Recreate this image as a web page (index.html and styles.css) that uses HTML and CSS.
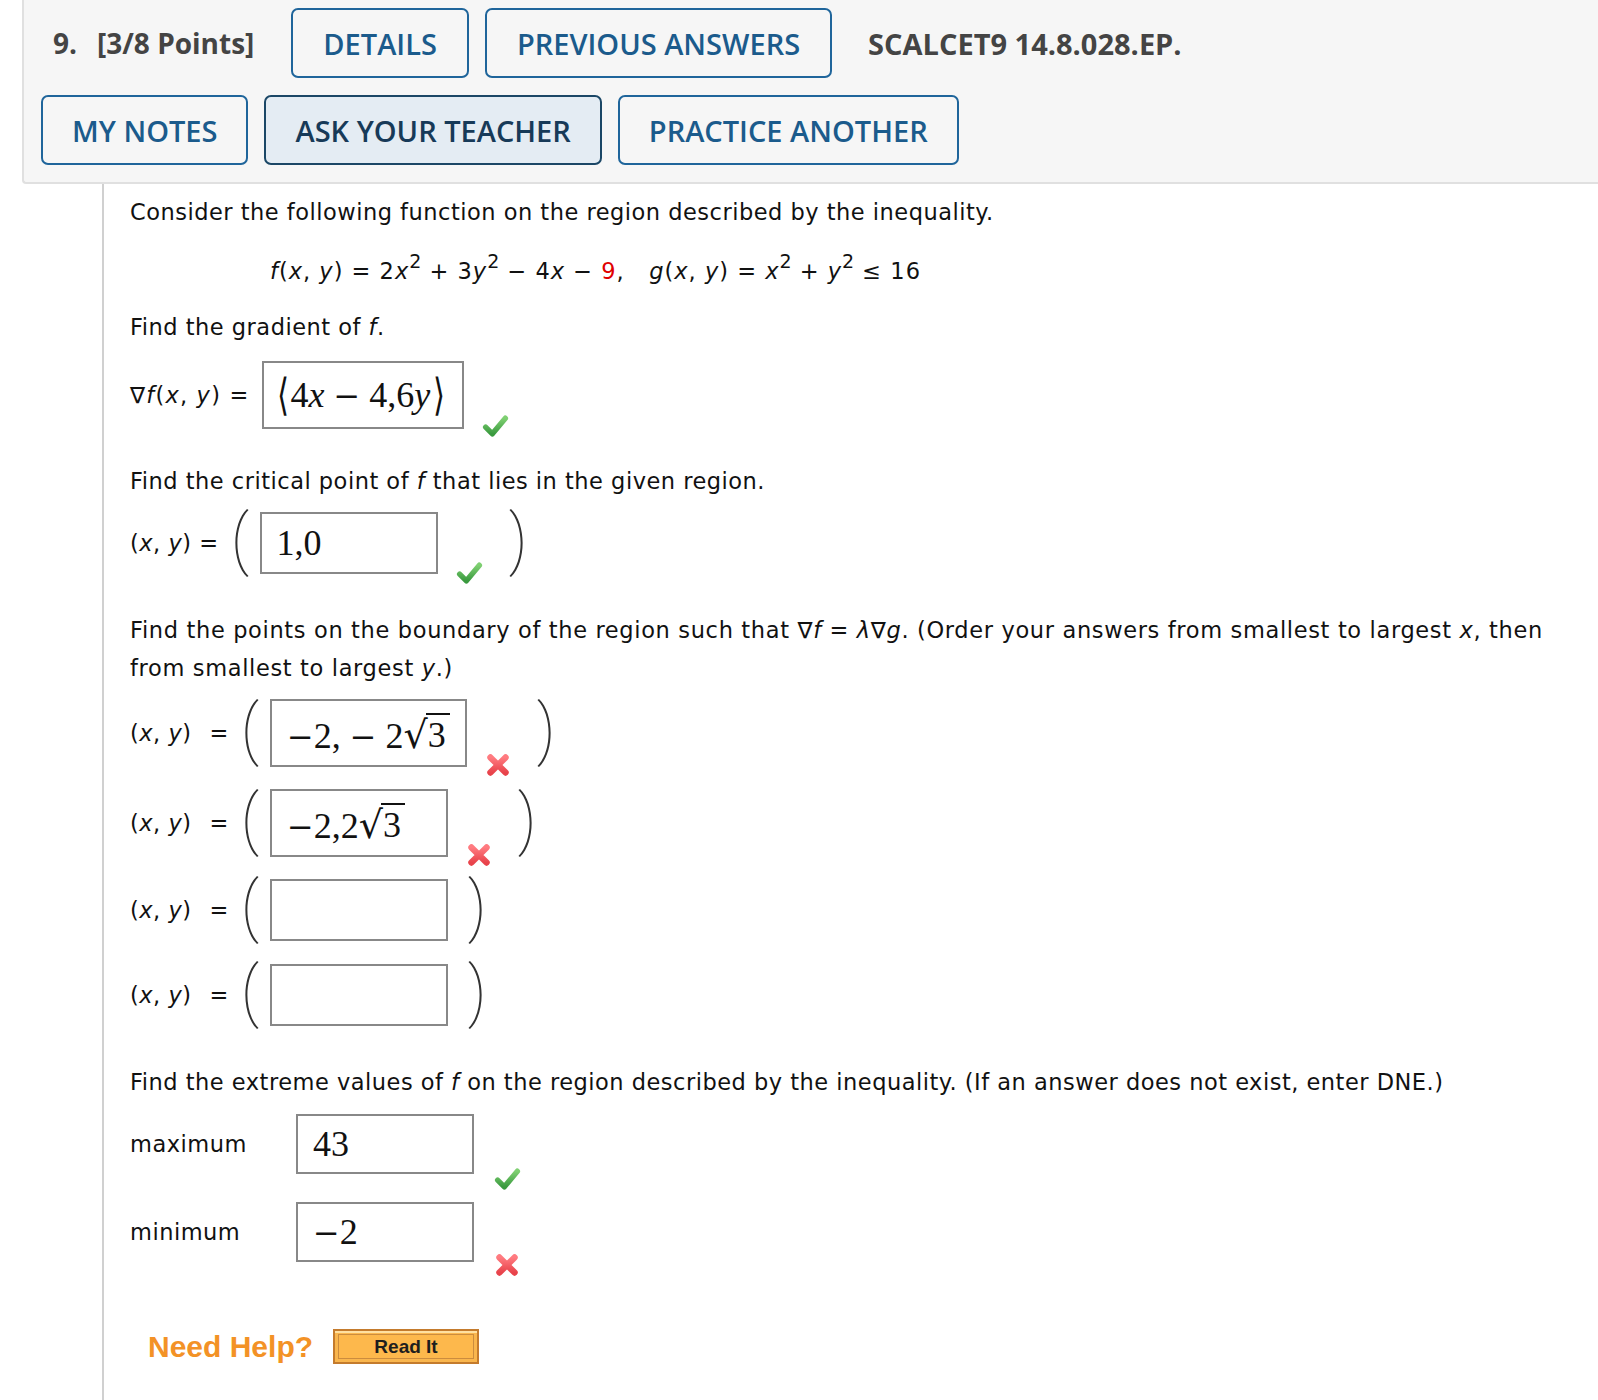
FILE: index.html
```html
<!DOCTYPE html>
<html lang="en">
<head>
<meta charset="utf-8">
<title>Question 9 - SCALCET9 14.8.028.EP.</title>
<link rel="stylesheet" href="styles.css">
</head>
<body>
<svg class="defs" width="0" height="0" aria-hidden="true">
  <defs>
    <linearGradient id="gOk" x1="0" y1="0" x2="0" y2="1">
      <stop offset="0" stop-color="#7fd072"/>
      <stop offset="1" stop-color="#3a9a3f"/>
    </linearGradient>
    <linearGradient id="gNo" x1="0" y1="0" x2="0" y2="1">
      <stop offset="0" stop-color="#ff7b80"/>
      <stop offset="1" stop-color="#e8434b"/>
    </linearGradient>
  </defs>
</svg>
<header class="qhead">
  <div class="qhead-row qhead-top">
    <h2 class="qtitle"><span class="qnum">9.</span><span>[3/8 Points]</span></h2>
    <button class="qbtn">DETAILS</button>
    <button class="qbtn">PREVIOUS ANSWERS</button>
    <span class="qcode">SCALCET9 14.8.028.EP.</span>
  </div>
  <div class="qhead-row">
    <button class="qbtn">MY NOTES</button>
    <button class="qbtn qbtn-active">ASK YOUR TEACHER</button>
    <button class="qbtn">PRACTICE ANOTHER</button>
  </div>
</header>

<main class="qbody">
  <p class="txt">Consider the following function on the region described by the inequality.</p>
  <p class="txt formula"><i>f</i>(<i>x</i>, <i>y</i>) = 2<i>x</i><sup>2</sup> + 3<i>y</i><sup>2</sup> − 4<i>x</i> − <span class="red">9</span>,&nbsp;&nbsp; <i>g</i>(<i>x</i>, <i>y</i>) = <i>x</i><sup>2</sup> + <i>y</i><sup>2</sup> ≤ 16</p>

  <p class="txt gap-18">Find the gradient of <i>f</i>.</p>
  <div class="row gap-15">
    <span class="lbl lbl-grad">∇<i>f</i>(<i>x</i>, <i>y</i>) =</span>
    <span class="ans ans-tall ans-grad"><span class="m"><span class="ang">⟨</span>4<i>x</i> <span class="mo">−</span> 4,6<i>y</i><span class="ang">⟩</span></span></span>
    <svg class="ic ic-ok" viewBox="0 0 26 23" width="27" height="24"><path d="M3.5 12.5 L10 19 L22.5 4" /></svg>
  </div>

  <p class="txt gap-33">Find the critical point of <i>f</i> that lies in the given region.</p>
  <div class="row gap-8">
    <span class="lbl">(<i>x</i>, <i>y</i>) =</span>
    <svg class="par par-l" viewBox="0 0 16 70" preserveAspectRatio="none"><path d="M14 1 C-1.5 16 -1.5 54 14 69 L15.5 68 C0.7 53 0.7 17 15.5 2 Z"/></svg>
    <span class="ans"><span class="m">1,0</span></span>
    <svg class="ic ic-ok" viewBox="0 0 26 23" width="27" height="24"><path d="M3.5 12.5 L10 19 L22.5 4" /></svg>
    <svg class="par par-r" viewBox="0 0 16 70" preserveAspectRatio="none"><path d="M2 1 C17.5 16 17.5 54 2 69 L0.5 68 C15.3 53 15.3 17 0.5 2 Z"/></svg>
  </div>

  <p class="txt gap-33 pts">Find the points on the boundary of the region such that ∇<i>f</i> = <i>λ</i>∇<i>g</i>. (Order your answers from smallest to largest <i>x</i>, then from smallest to largest <i>y</i>.)</p>
  <div class="row gap-11">
    <span class="lbl lbl-pt"><span>(<i>x</i>, <i>y</i>)</span><span class="eq">=</span></span>
    <svg class="par par-l" viewBox="0 0 16 70" preserveAspectRatio="none"><path d="M14 1 C-1.5 16 -1.5 54 14 69 L15.5 68 C0.7 53 0.7 17 15.5 2 Z"/></svg>
    <span class="ans ans-tall"><span class="m"><span class="mo">−</span>2, <span class="mo">−</span> 2<span class="sqrt"><span class="rad">√</span><span class="rcd">3</span></span></span></span>
    <svg class="ic ic-no" viewBox="0 0 24 24" width="26" height="26"><path d="M5 5 L19 19 M19 5 L5 19" /></svg>
    <svg class="par par-r" viewBox="0 0 16 70" preserveAspectRatio="none"><path d="M2 1 C17.5 16 17.5 54 2 69 L0.5 68 C15.3 53 15.3 17 0.5 2 Z"/></svg>
  </div>
  <div class="row gap-20">
    <span class="lbl lbl-pt"><span>(<i>x</i>, <i>y</i>)</span><span class="eq">=</span></span>
    <svg class="par par-l" viewBox="0 0 16 70" preserveAspectRatio="none"><path d="M14 1 C-1.5 16 -1.5 54 14 69 L15.5 68 C0.7 53 0.7 17 15.5 2 Z"/></svg>
    <span class="ans ans-tall"><span class="m"><span class="mo">−</span>2,2<span class="sqrt"><span class="rad">√</span><span class="rcd">3</span></span></span></span>
    <svg class="ic ic-no" viewBox="0 0 24 24" width="26" height="26"><path d="M5 5 L19 19 M19 5 L5 19" /></svg>
    <svg class="par par-r" viewBox="0 0 16 70" preserveAspectRatio="none"><path d="M2 1 C17.5 16 17.5 54 2 69 L0.5 68 C15.3 53 15.3 17 0.5 2 Z"/></svg>
  </div>
  <div class="row gap-17">
    <span class="lbl lbl-pt"><span>(<i>x</i>, <i>y</i>)</span><span class="eq">=</span></span>
    <svg class="par par-l" viewBox="0 0 16 70" preserveAspectRatio="none"><path d="M14 1 C-1.5 16 -1.5 54 14 69 L15.5 68 C0.7 53 0.7 17 15.5 2 Z"/></svg>
    <span class="ans"></span>
    <svg class="par par-r" viewBox="0 0 16 70" preserveAspectRatio="none"><path d="M2 1 C17.5 16 17.5 54 2 69 L0.5 68 C15.3 53 15.3 17 0.5 2 Z"/></svg>
  </div>
  <div class="row gap-15">
    <span class="lbl lbl-pt"><span>(<i>x</i>, <i>y</i>)</span><span class="eq">=</span></span>
    <svg class="par par-l" viewBox="0 0 16 70" preserveAspectRatio="none"><path d="M14 1 C-1.5 16 -1.5 54 14 69 L15.5 68 C0.7 53 0.7 17 15.5 2 Z"/></svg>
    <span class="ans"></span>
    <svg class="par par-r" viewBox="0 0 16 70" preserveAspectRatio="none"><path d="M2 1 C17.5 16 17.5 54 2 69 L0.5 68 C15.3 53 15.3 17 0.5 2 Z"/></svg>
  </div>

  <p class="txt gap-33">Find the extreme values of <i>f</i> on the region described by the inequality. (If an answer does not exist, enter DNE.)</p>
  <div class="row gap-13">
    <span class="lbl lbl-w">maximum</span>
    <span class="ans ans-sm"><span class="m">43</span></span>
    <svg class="ic ic-ok ic-wide" viewBox="0 0 26 23" width="27" height="24"><path d="M3.5 12.5 L10 19 L22.5 4" /></svg>
  </div>
  <div class="row gap-28">
    <span class="lbl lbl-w">minimum</span>
    <span class="ans ans-sm"><span class="m"><span class="mo">−</span>2</span></span>
    <svg class="ic ic-no ic-wide ic-up" viewBox="0 0 24 24" width="26" height="26"><path d="M5 5 L19 19 M19 5 L5 19" /></svg>
  </div>

  <div class="help">
    <span class="help-t">Need Help?</span>
    <button class="readit">Read It</button>
  </div>
</main>
</body>
</html>
```

FILE: styles.css
```css
* { box-sizing: border-box; }
html, body { margin: 0; padding: 0; background: #fff; }
body { font-family: "DejaVu Sans", Verdana, sans-serif; color: #111; }
.defs { position: absolute; width: 0; height: 0; overflow: hidden; }

/* ---------- header panel ---------- */
.qhead {
  margin-left: 22px;
  background: #f6f6f6;
  border-left: 2px solid #e0e0e0;
  border-bottom: 2px solid #e0e0e0;
  border-bottom-left-radius: 4px;
  padding: 8px 0 17px 17px;
  font-family: "Open Sans", sans-serif;
}
.qhead-row { display: flex; align-items: center; gap: 16px; }
.qhead-top { padding-left: 12px; margin-bottom: 17px; }
.qtitle { margin: 0 21px 0 0; font-size: 28px; font-weight: 700; color: #444; }
.qnum { margin-right: 20px; }
.qbtn {
  height: 70px;
  padding: 0 30px;
  border: 2px solid #1f659b;
  border-radius: 7px;
  background: transparent;
  color: #1b5b8c;
  font-family: "Open Sans", sans-serif;
  font-size: 29px;
  font-weight: 600;
}
.qhead-row + .qhead-row .qbtn { padding: 0 29px; }
.qbtn-active { background: #e4ecf3; border-color: #1b4766; color: #173a58; }
.qcode { margin-left: 20px; font-size: 29px; font-weight: 700; color: #444; }

/* ---------- question body ---------- */
.qbody {
  margin-left: 102px;
  border-left: 2px solid #d0d0d0;
  padding: 9px 20px 60px 26px;
  font-size: 22.5px;
  letter-spacing: 0.5px;
  line-height: 38px;
}
.txt { margin: 0; }
.pts { letter-spacing: 0.65px; }
.formula { margin-top: 21px; padding-left: 140px; letter-spacing: 1px; }
.formula sup { font-size: 19px; line-height: 0; vertical-align: 11px; letter-spacing: 0; }
.red { color: #e00000; }

.gap-8 { margin-top: 8px; }
.gap-11 { margin-top: 11px; }
.gap-13 { margin-top: 13px; }
.gap-15 { margin-top: 15px; }
.gap-17 { margin-top: 17px; }
.gap-18 { margin-top: 18px; }
.gap-20 { margin-top: 20px; }
.gap-28 { margin-top: 28px; }
.gap-33 { margin-top: 33px; }

.row { display: flex; align-items: center; }
.lbl { margin-right: 14px; white-space: nowrap; }
.lbl-grad { letter-spacing: 1.2px; margin-right: 12px; }
.lbl-pt .eq { margin-left: 18px; }
.lbl-w { width: 166px; margin-right: 0; }

.par { width: 16px; height: 70px; flex: none; }
.par path { fill: #333; }
.par-l { margin-right: 11px; }
.par-r { margin-left: 20px; }

.ans {
  display: inline-flex;
  align-items: center;
  min-width: 178px;
  height: 62px;
  padding: 0 15px;
  border: 2px solid #888;
  background: #fff;
  flex: none;
}
.ans-tall { height: 68px; }
.ans-sm { height: 60px; }
.ans-grad { padding-left: 10px; }

.m {
  font-family: "Liberation Serif", "DejaVu Serif", serif;
  font-size: 36px;
  line-height: 1;
  letter-spacing: 0;
  color: #111;
  white-space: nowrap;
}
.m i { font-style: italic; }
.mo { font-family: "DejaVu Serif", serif; font-size: 32px; }
.ang {
  display: inline-block;
  font-family: "DejaVu Sans", sans-serif;
  font-weight: 300;
  font-size: 44px;
  line-height: 36px;
  transform: scaleX(0.7);
  vertical-align: -3px;
}
.sqrt { display: inline-flex; align-items: flex-end; }
.rad { font-family: "DejaVu Serif", serif; font-size: 38px; line-height: 1; }
.rcd { border-top: 2px solid #111; line-height: 1; padding: 2px 4px 0 2px; margin-left: -2px; margin-bottom: 1px; }

/* feedback icons */
.ic { flex: none; align-self: flex-start; margin: 53px 0 -100px 18px; }
.ic path { fill: none; stroke-linecap: round; stroke-linejoin: round; }
.ic-ok path { stroke: url(#gOk); stroke-width: 5.2; }
.ic-no path { stroke: url(#gNo); stroke-width: 5.8; }
.ic-no { margin-top: 54px; }
.ic-wide { margin-left: 20px; }
.ic-up { margin-top: 50px; }
.ic + .par-r { margin-left: 26px; }

/* need help */
.help { display: flex; align-items: center; gap: 20px; margin-top: 67px; padding-left: 18px; letter-spacing: 0; }
.help-t {
  font-family: "Liberation Sans", Arial, sans-serif;
  font-weight: 700;
  font-size: 30px;
  line-height: 35px;
  color: #f39226;
}
.readit {
  width: 146px;
  height: 35px;
  border: 2px solid #c47b2d;
  background: #fdb84c;
  box-shadow: inset 0 2px 0 #ffe0a0, inset 0 0 0 3px #f9b64e, inset 0 0 0 4px #cc8c3e;
  font-family: "Liberation Sans", Arial, sans-serif;
  font-weight: 700;
  font-size: 19px;
  color: #1e1e1e;
  padding: 0;
}
```
